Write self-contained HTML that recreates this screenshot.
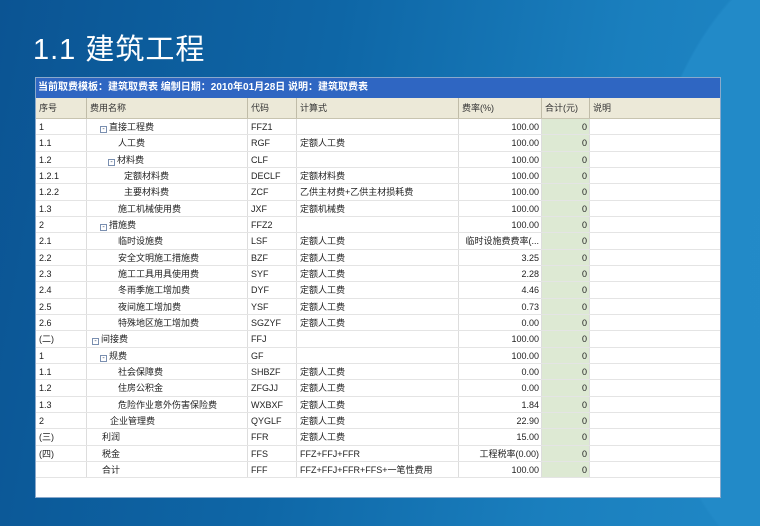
<!DOCTYPE html>
<html><head><meta charset="utf-8"><style>
html,body{margin:0;width:760px;height:526px;overflow:hidden}
body{position:relative;font-family:"Liberation Sans","Noto Sans CJK SC",sans-serif;
background:radial-gradient(ellipse 210px 330px at 850px 270px,#238bc9 0,#228ac8 99%,rgba(0,0,0,0) 100%),linear-gradient(100deg,#0b5493 0%,#0e66a6 40%,#1a7fbe 75%,#2088c6 100%);}
h1{position:absolute;left:33px;top:26px;margin:0;font-weight:normal;color:#fff;font-size:29px;letter-spacing:1px;font-family:"Liberation Sans","Noto Sans CJK SC",sans-serif;}
.win{position:absolute;left:35px;top:77px;width:686px;height:421px;background:#fff;border:1px solid #8aa9cc;box-sizing:border-box;overflow:hidden}
.tb{height:20px;background:#2f66c2;color:#fff;font-size:10px;font-weight:bold;line-height:20px;padding-left:2px;border-bottom:1px solid #fff}
.hd{position:absolute;top:20px;left:0;width:684px;height:20px;background:#ece9d8;border-bottom:1px solid #c8c4b0;}
.c{position:absolute;top:0;height:100%;box-sizing:border-box;border-right:1px solid #ddd;font-size:9px;color:#222;white-space:nowrap;overflow:hidden;padding-left:3px}
.hd .c{line-height:20px;border-right:1px solid #c0bca8;color:#333}
.r{position:absolute;left:0;width:684px;height:16.33px;border-bottom:1px solid #e4e4e4;line-height:16px;box-sizing:border-box}
.g{background:#dde9d3}
.rt{text-align:right;padding-right:2px}
.b{display:inline-block;width:7px;height:7px;border:1px solid #7a8fb0;font-size:7px;line-height:6px;text-align:center;color:#346;vertical-align:-1px;margin-right:2px;box-sizing:border-box}
</style></head><body>
<h1>1.1 建筑工程</h1>
<div class="win">
<div class="tb">当前取费模板：建筑取费表 编制日期：2010年01月28日 说明：建筑取费表</div>
<div class="hd">
<div class="c" style="left:0;width:51px">序号</div>
<div class="c" style="left:51px;width:161px">费用名称</div>
<div class="c" style="left:212px;width:49px">代码</div>
<div class="c" style="left:261px;width:162px">计算式</div>
<div class="c" style="left:423px;width:83px">费率(%)</div>
<div class="c" style="left:506px;width:48px">合计(元)</div>
<div class="c" style="left:554px;width:130px;border:0">说明</div>
</div>
<div id="rows"></div>
</div>
<script>
var d=[
["1",'<span style="margin-left:10px"></span><span class="b">-</span>直接工程费',"FFZ1","","100.00"],
["1.1",'<span style="margin-left:28px"></span>人工费',"RGF","定额人工费","100.00"],
["1.2",'<span style="margin-left:18px"></span><span class="b">-</span>材料费',"CLF","","100.00"],
["1.2.1",'<span style="margin-left:34px"></span>定额材料费',"DECLF","定额材料费","100.00"],
["1.2.2",'<span style="margin-left:34px"></span>主要材料费',"ZCF","乙供主材费+乙供主材损耗费","100.00"],
["1.3",'<span style="margin-left:28px"></span>施工机械使用费',"JXF","定额机械费","100.00"],
["2",'<span style="margin-left:10px"></span><span class="b">-</span>措施费',"FFZ2","","100.00"],
["2.1",'<span style="margin-left:28px"></span>临时设施费',"LSF","定额人工费","临时设施费费率(..."],
["2.2",'<span style="margin-left:28px"></span>安全文明施工措施费',"BZF","定额人工费","3.25"],
["2.3",'<span style="margin-left:28px"></span>施工工具用具使用费',"SYF","定额人工费","2.28"],
["2.4",'<span style="margin-left:28px"></span>冬雨季施工增加费',"DYF","定额人工费","4.46"],
["2.5",'<span style="margin-left:28px"></span>夜间施工增加费',"YSF","定额人工费","0.73"],
["2.6",'<span style="margin-left:28px"></span>特殊地区施工增加费',"SGZYF","定额人工费","0.00"],
["(二)",'<span style="margin-left:2px"></span><span class="b">-</span>间接费',"FFJ","","100.00"],
["1",'<span style="margin-left:10px"></span><span class="b">-</span>规费',"GF","","100.00"],
["1.1",'<span style="margin-left:28px"></span>社会保障费',"SHBZF","定额人工费","0.00"],
["1.2",'<span style="margin-left:28px"></span>住房公积金',"ZFGJJ","定额人工费","0.00"],
["1.3",'<span style="margin-left:28px"></span>危险作业意外伤害保险费',"WXBXF","定额人工费","1.84"],
["2",'<span style="margin-left:20px"></span>企业管理费',"QYGLF","定额人工费","22.90"],
["(三)",'<span style="margin-left:12px"></span>利润',"FFR","定额人工费","15.00"],
["(四)",'<span style="margin-left:12px"></span>税金',"FFS","FFZ+FFJ+FFR","工程税率(0.00)"],
["",'<span style="margin-left:12px"></span>合计',"FFF","FFZ+FFJ+FFR+FFS+一笔性费用","100.00"]];
var h="";
d.forEach(function(r,i){
h+='<div class="r" style="top:'+(41+i*16.33)+'px">'+
'<div class="c" style="left:0;width:51px">'+r[0]+'</div>'+
'<div class="c" style="left:51px;width:161px">'+r[1]+'</div>'+
'<div class="c" style="left:212px;width:49px">'+r[2]+'</div>'+
'<div class="c" style="left:261px;width:162px">'+r[3]+'</div>'+
'<div class="c rt" style="left:423px;width:83px">'+r[4]+'</div>'+
'<div class="c rt g" style="left:506px;width:48px">0</div>'+
'<div class="c" style="left:554px;width:130px;border:0"></div></div>';});
document.getElementById("rows").innerHTML=h;
</script>
</body></html>
